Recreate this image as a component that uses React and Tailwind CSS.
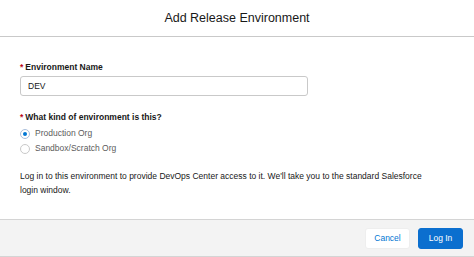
export default function App() {
  return (
    <div
      className="w-[474px] h-[257px] flex flex-col bg-white overflow-hidden text-[#181818]"
      style={{ fontFamily: '"Liberation Sans", Arial, sans-serif' }}
    >
      {/* Header */}
      <div className="h-[37px] shrink-0 flex items-center justify-center border-b border-[#c9c9c9]">
        <h2 className="text-[12.5px] leading-[16px] text-[#181818]">Add Release Environment</h2>
      </div>

      {/* Body */}
      <div className="flex-1 px-[20px] pt-[24px]">
        <label className="flex items-center h-[12px] text-[8.5px] font-bold text-[#181818]">
          <span className="text-[#ba0517] mr-[2px]">*</span>
          <span>Environment Name</span>
        </label>
        <div className="mt-[3px] w-[288px] h-[20px] flex items-center rounded-[3px] border border-[#c9c9c9] px-[7px] text-[8.5px] text-[#181818]">
          DEV
        </div>

        <label className="mt-[15px] flex items-center h-[12px] text-[8.5px] font-bold text-[#181818]">
          <span className="text-[#ba0517] mr-[2px]">*</span>
          <span>What kind of environment is this?</span>
        </label>
        <div className="mt-[3px] flex flex-col">
          <div className="h-[15px] flex items-center gap-[5px]">
            <span className="w-[10px] h-[10px] rounded-full border border-[#a9bedb] bg-white flex items-center justify-center">
              <span className="w-[4px] h-[4px] rounded-full bg-[#0176d3]" />
            </span>
            <span className="text-[8.5px] text-[#5c5c5c]">Production Org</span>
          </div>
          <div className="h-[15px] flex items-center gap-[5px]">
            <span className="w-[10px] h-[10px] rounded-full border border-[#c9c9c9] bg-white" />
            <span className="text-[8.5px] text-[#5c5c5c]">Sandbox/Scratch Org</span>
          </div>
        </div>

        <p className="mt-[13px] text-[8.5px] leading-[14px] text-[#181818] pr-[30px]">
          Log in to this environment to provide DevOps Center access to it. We'll take you to the standard Salesforce login window.
        </p>
      </div>

      {/* Footer */}
      <div className="h-[38px] shrink-0 flex items-start justify-end gap-[8px] pt-[8px] pr-[11px] bg-[#f3f3f3] border-t border-b border-[#d4d4d4]">
        <button className="w-[45px] h-[21px] rounded-[3px] bg-white border border-[#eeeeee] text-[8.5px] text-[#0176d3]">
          Cancel
        </button>
        <button className="w-[45px] h-[21px] rounded-[3px] bg-[#0b6fcf] border border-[#0b6fcf] text-[8.5px] text-white">
          Log In
        </button>
      </div>
    </div>
  );
}
